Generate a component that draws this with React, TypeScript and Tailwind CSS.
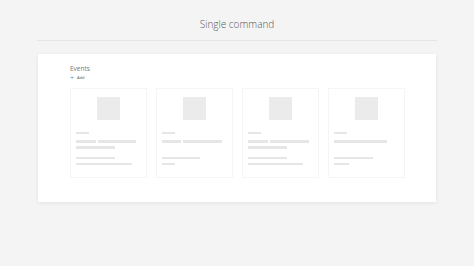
import React from "react";

type CardSpec = {
  title: number[][];
  details: number[];
};

const cards: CardSpec[] = [
  { title: [[20, 38], [39]], details: [39, 56] },
  { title: [[19, 39]], details: [38, 13] },
  { title: [[20, 39], [39]], details: [39, 55] },
  { title: [[53]], details: [39, 15] },
];

function Card({ spec }: { spec: CardSpec }) {
  return (
    <div className="w-[77px] h-[90px] border border-[#f5f5f5] bg-white flex flex-col">
      <div className="flex justify-center pt-[8px]">
        <div className="w-[23px] h-[23px] bg-[#ebebeb]" />
      </div>
      <div className="pl-[5px] pt-[12px] flex flex-col">
        <div className="h-[2px] w-[13px] bg-[#e6e6e6]" />
        <div className="h-[16px] mt-[6px] flex flex-col gap-[3px]">
          {spec.title.map((row, i) => (
            <div key={i} className="flex gap-[2px]">
              {row.map((w, j) => (
                <div key={j} className="h-[3px] bg-[#e6e6e6]" style={{ width: w }} />
              ))}
            </div>
          ))}
        </div>
        <div className="flex flex-col gap-[4px] mt-[1px]">
          {spec.details.map((w, i) => (
            <div key={i} className="h-[2px] bg-[#e6e6e6]" style={{ width: w }} />
          ))}
        </div>
      </div>
    </div>
  );
}

export default function App() {
  return (
    <div
      className="w-[474px] h-[266px] bg-[#f4f4f4] overflow-hidden"
      style={{ fontFamily: '"Open Sans", "Noto Sans", sans-serif' }}
    >
      <div className="pt-[16px] h-[40px] text-center text-[10px] leading-[16px] text-[#5a5a5a] font-light">
        Single command
      </div>
      <div className="mx-[37px] h-px bg-[#e4e4e4]" />
      <div className="mt-[13px] ml-[38px] w-[398px] h-[148px] bg-white shadow-[0_1px_4px_rgba(0,0,0,0.07)] pl-[32px] pt-[11px]">
        <div className="text-[6.5px] leading-[8px] text-[#777]">Events</div>
        <div className="flex items-center gap-[3px] mt-[2px] h-[6px]">
          <span className="text-[7px] leading-[6px] text-[#4a7ab8] font-light">+</span>
          <span className="text-[4px] leading-[6px] text-[#555]">Add</span>
        </div>
        <div className="flex gap-[9px] mt-[7px]">
          {cards.map((c, i) => (
            <Card key={i} spec={c} />
          ))}
        </div>
      </div>
    </div>
  );
}
